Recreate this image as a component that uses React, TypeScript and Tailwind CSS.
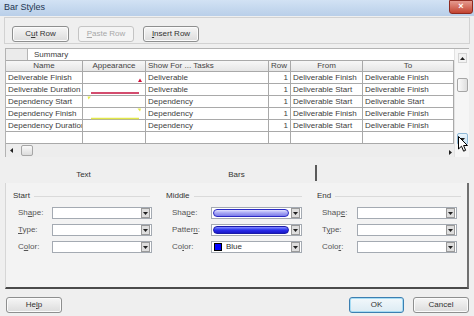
import React from 'react';

// ── Grid data ─────────────────────────────────────────────────────────────────

type Look = 'finish' | 'duration' | 'depStart' | 'depFinish' | 'depDuration' | null;

interface BarRow {
  name: string;
  look: Look;
  show: string;
  row: string;
  from: string;
  to: string;
}

const ROWS: BarRow[] = [
  { name: 'Deliverable Finish', look: 'finish', show: 'Deliverable', row: '1', from: 'Deliverable Finish', to: 'Deliverable Finish' },
  { name: 'Deliverable Duration', look: 'duration', show: 'Deliverable', row: '1', from: 'Deliverable Start', to: 'Deliverable Finish' },
  { name: 'Dependency Start', look: 'depStart', show: 'Dependency', row: '1', from: 'Deliverable Start', to: 'Deliverable Start' },
  { name: 'Dependency Finish', look: 'depFinish', show: 'Dependency', row: '1', from: 'Deliverable Finish', to: 'Deliverable Finish' },
  { name: 'Dependency Duration', look: null, show: 'Dependency', row: '1', from: 'Deliverable Start', to: 'Deliverable Finish' },
  { name: '', look: null, show: '', row: '', from: '', to: '' },
];

// ── Small drawings ────────────────────────────────────────────────────────────

function Appearance({ look }: { look: Look }) {
  return (
    <svg width="62" height="11" className="overflow-visible">
      {look === 'finish' && <polygon points="55,10 57,6.5 59,10" fill="#d0103a" />}
      {look === 'duration' && <line x1="8" y1="9" x2="56" y2="9" stroke="#c4103e" strokeWidth="1.6" />}
      {look === 'depStart' && <polygon points="4.5,0.5 8,0.5 5.5,3.5" fill="#e4ea4a" />}
      {look === 'depFinish' && (
        <>
          <polygon points="54.5,0.5 58,0.5 57,3.5" fill="#e4ea4a" />
          <line x1="8" y1="10.5" x2="56" y2="10.5" stroke="#e2e84a" strokeWidth="1.5" />
        </>
      )}
    </svg>
  );
}

function Caret({ dir }: { dir: 'down' | 'up' | 'left' | 'right' }) {
  const pts = {
    down: '0,0 5,0 2.5,3',
    up: '0,3 5,3 2.5,0',
    left: '3,0 3,5 0,2.5',
    right: '0,0 0,5 3,2.5',
  }[dir];
  const w = dir === 'down' || dir === 'up' ? 5 : 3;
  const h = dir === 'down' || dir === 'up' ? 3 : 5;
  return (
    <svg width={w} height={h}>
      <polygon points={pts} fill="#202020" />
    </svg>
  );
}

// ── Buttons ───────────────────────────────────────────────────────────────────

function Btn({
  children,
  width,
  disabled,
  primary,
}: {
  children: React.ReactNode;
  width: string;
  disabled?: boolean;
  primary?: boolean;
}) {
  const skin = disabled
    ? 'border-[#c4c4c4] text-[#a8a8a8] bg-[#f4f4f4]'
    : primary
      ? 'border-[#3c7fb1] text-[#333] bg-gradient-to-b from-[#f2f8fb] to-[#dcebf3] shadow-[inset_0_0_0_1px_#a6dcf4]'
      : 'border-[#8e8f8f] text-[#333] bg-gradient-to-b from-[#f6f6f6] to-[#dcdcdc] shadow-[inset_0_0_0_1px_#fbfbfb]';
  return (
    <div
      className={`${width} h-[16px] rounded-[3px] border flex items-center justify-center text-[8px] ${skin}`}
    >
      {children}
    </div>
  );
}

// ── Combo box ─────────────────────────────────────────────────────────────────

function Combo({ width, children }: { width: string; children?: React.ReactNode }) {
  return (
    <div className={`${width} h-[12px] bg-white border border-[#a4aab2] flex items-center`}>
      <div className="flex-1 min-w-0 h-full flex items-center">{children}</div>
      <div className="w-[9px] h-[10px] mr-px bg-[#dedede] border border-[#9a9a9a] flex items-center justify-center">
        <Caret dir="down" />
      </div>
    </div>
  );
}

function Field({
  label,
  labelWidth,
  comboWidth,
  children,
}: {
  label: React.ReactNode;
  labelWidth: string;
  comboWidth: string;
  children?: React.ReactNode;
}) {
  return (
    <div className="flex items-center h-[12px]">
      <span className={`${labelWidth} text-[8px] text-[#555]`}>{label}</span>
      <Combo width={comboWidth}>{children}</Combo>
    </div>
  );
}

function GroupTitle({ title, lineWidth }: { title: string; lineWidth: string }) {
  return (
    <div className="h-[10px] flex items-center gap-[4px] text-[8px] text-[#333]">
      <span>{title}</span>
      <div className={`${lineWidth} h-px bg-[#dadada]`} />
    </div>
  );
}

// ── App ───────────────────────────────────────────────────────────────────────

export default function App() {
  const cell = 'h-full border-r border-[#a9a9a9] px-[2px] overflow-hidden whitespace-nowrap flex items-center';

  return (
    <div className="relative w-[474px] h-[316px] overflow-hidden bg-[#efefef] flex flex-col font-['Liberation_Sans',Arial,sans-serif]">
      {/* Title bar */}
      <div className="h-[16px] bg-gradient-to-b from-[#d2e2f4] to-[#b9cfe9] flex items-center justify-between pl-[4px]">
        <span className="text-[9px] text-[#1e3550]">Bar Styles</span>
        <div className="w-[24px] h-[14px] mr-[1px] self-start rounded-b-[3px] bg-gradient-to-b from-[#e59a8f] to-[#c2412f] border border-[#8e2a20] flex items-center justify-center text-white text-[9px] font-bold">
          ×
        </div>
      </div>

      {/* Toolbar */}
      <div className="mx-[4px] mt-px h-[27px] border border-[#d2d2d2] flex items-end gap-[9px] pl-[7px] pb-px">
        <Btn width="w-[57px]">
          C<span className="underline">u</span>t Row
        </Btn>
        <Btn width="w-[56px]" disabled>
          <span className="underline">P</span>aste Row
        </Btn>
        <Btn width="w-[56px]">
          <span className="underline">I</span>nsert Row
        </Btn>
      </div>

      {/* Grid */}
      <div className="mx-[5px] mt-[4px] h-[109px] flex bg-white border-t border-l border-[#b3b3b3]">
        <div className="w-[448px] flex flex-col text-[8px] text-[#404040]">
          {/* Summary row */}
          <div className="h-[12px] flex border-b border-[#a9a9a9]">
            <div className="w-[22px] h-full bg-[#ebebeb] border-r border-[#b5b5b5]" />
            <span className="pl-[6px] leading-[12px]">Summary</span>
          </div>
          {/* Header */}
          <div className="h-[11px] flex bg-gradient-to-b from-[#f7f7f7] to-[#e6e6e6] border-b border-[#a9a9a9] text-[#444]">
            <div className={`w-[77px] ${cell} justify-center`}>Name</div>
            <div className={`w-[63px] ${cell} justify-center`}>Appearance</div>
            <div className={`w-[123px] ${cell}`}>Show For ... Tasks</div>
            <div className={`w-[22px] ${cell}`}>Row</div>
            <div className={`w-[72px] ${cell} justify-center`}>From</div>
            <div className={`w-[91px] ${cell} justify-center`}>To</div>
          </div>
          {/* Rows */}
          {ROWS.map((r, i) => (
            <div key={i} className="h-[12px] flex border-b border-[#a9a9a9]">
              <div className={`w-[77px] ${cell}`}>{r.name}</div>
              <div className="w-[63px] h-full border-r border-[#a9a9a9] overflow-visible">
                <Appearance look={r.look} />
              </div>
              <div className={`w-[123px] ${cell}`}>{r.show}</div>
              <div className={`w-[22px] ${cell} justify-end`}>{r.row}</div>
              <div className={`w-[72px] ${cell}`}>{r.from}</div>
              <div className={`w-[91px] ${cell}`}>{r.to}</div>
            </div>
          ))}
          {/* Horizontal scrollbar */}
          <div className="flex-1 bg-[#ededed] flex items-center pl-[4px] pr-[2px]">
            <Caret dir="left" />
            <div className="ml-[8px] w-[12px] h-[11px] rounded-[2px] border border-[#a6a6a6] bg-gradient-to-b from-[#fafafa] to-[#dcdcdc]" />
            <div className="flex-1" />
            <div className="mt-[4px]">
              <Caret dir="right" />
            </div>
          </div>
        </div>
        {/* Vertical scrollbar */}
        <div className="flex-1 bg-[#f6f6f6] border-l border-[#e2e2e2] flex flex-col items-center">
          <div className="mt-[4px] w-[9px] h-[10px] border border-[#d4d4d4] bg-[#f2f2f2] flex items-center justify-center">
            <Caret dir="up" />
          </div>
          <div className="mt-[15px] w-[11px] h-[14px] rounded-[2px] border border-[#a6a6a6] bg-gradient-to-r from-[#fbfbfb] to-[#dedede]" />
          <div className="flex-1" />
          <div className="mb-[12px] w-[11px] h-[12px] rounded-[2px] border border-[#8fb8d6] bg-gradient-to-b from-[#eaf5fc] to-[#c9e3f4] flex items-center justify-center">
            <Caret dir="down" />
          </div>
        </div>
      </div>

      {/* Tabs */}
      <div className="mx-[5px] h-[26px] flex items-center text-[8px] text-[#333]">
        <div className="w-[157px] h-full flex items-center justify-center pt-[9px]">Text</div>
        <div className="w-[149px] h-full flex items-center justify-center pt-[9px]">Bars</div>
        <div className="ml-[4px] mt-[6px] w-[2px] h-[16px] bg-[#5a5a5a]" />
      </div>

      {/* Bars panel */}
      <div className="mx-[5px] h-[106px] bg-[#f3f3f3] border-l border-[#d6d6d6] border-r-2 border-r-[#707070] border-b-2 border-b-[#4a4a4a] flex pl-[7px] pt-[8px]">
        {/* Start */}
        <div className="w-[153px] flex flex-col">
          <GroupTitle title="Start" lineWidth="w-[116px]" />
          <div className="mt-[6px] flex flex-col gap-[5px]">
            <Field label={<>Sh<span className="underline">a</span>pe:</>} labelWidth="w-[39px] pl-[5px]" comboWidth="w-[100px]" />
            <Field label={<><span className="underline">T</span>ype:</>} labelWidth="w-[39px] pl-[5px]" comboWidth="w-[100px]" />
            <Field label={<>C<span className="underline">o</span>lor:</>} labelWidth="w-[39px] pl-[5px]" comboWidth="w-[100px]" />
          </div>
        </div>
        {/* Middle */}
        <div className="w-[151px] flex flex-col">
          <GroupTitle title="Middle" lineWidth="w-[108px]" />
          <div className="mt-[6px] flex flex-col gap-[5px]">
            <Field label={<>Sha<span className="underline">p</span>e:</>} labelWidth="w-[45px] pl-[6px]" comboWidth="w-[91px]">
              <div className="ml-px w-[76px] h-[8px] rounded-full border border-[#2a2ac4] bg-gradient-to-b from-[#e2e2ff] via-[#a6a6f4] to-[#7c7ce8]" />
            </Field>
            <Field label={<>Patter<span className="underline">n</span>:</>} labelWidth="w-[45px] pl-[6px]" comboWidth="w-[91px]">
              <div className="ml-px w-[76px] h-[8px] rounded-full border border-[#1a1aa8] bg-gradient-to-b from-[#8a8aff] via-[#2c2cec] to-[#1818c8]" />
            </Field>
            <Field label={<>Co<span className="underline">l</span>or:</>} labelWidth="w-[45px] pl-[6px]" comboWidth="w-[91px]">
              <div className="ml-[2px] w-[8px] h-[8px] bg-[#0000ff] border border-black" />
              <span className="ml-[4px] text-[8px] text-[#333]">Blue</span>
            </Field>
          </div>
        </div>
        {/* End */}
        <div className="flex-1 flex flex-col">
          <GroupTitle title="End" lineWidth="w-[126px]" />
          <div className="mt-[6px] flex flex-col gap-[5px]">
            <Field label={<>Shap<span className="underline">e</span>:</>} labelWidth="w-[40px] pl-[5px]" comboWidth="w-[100px]" />
            <Field label={<>T<span className="underline">y</span>pe:</>} labelWidth="w-[40px] pl-[5px]" comboWidth="w-[100px]" />
            <Field label={<>Colo<span className="underline">r</span>:</>} labelWidth="w-[40px] pl-[5px]" comboWidth="w-[100px]" />
          </div>
        </div>
      </div>

      {/* Footer buttons */}
      <div className="mt-[8px] flex items-center pl-[6px] pr-[5px]">
        <Btn width="w-[56px]">
          He<span className="underline">l</span>p
        </Btn>
        <div className="flex-1" />
        <Btn width="w-[55px]" primary>
          OK
        </Btn>
        <div className="w-[9px]" />
        <Btn width="w-[56px]">Cancel</Btn>
      </div>

      {/* Mouse pointer */}
      <svg className="absolute left-[458px] top-[136px]" width="11" height="17">
        <path
          d="M0.5 0.5 L0.5 13 L3.5 10.2 L5.6 15.2 L7.6 14.3 L5.6 9.5 L9.5 9.5 Z"
          fill="#ffffff"
          stroke="#000000"
          strokeWidth="1"
          strokeLinejoin="round"
        />
      </svg>
    </div>
  );
}
